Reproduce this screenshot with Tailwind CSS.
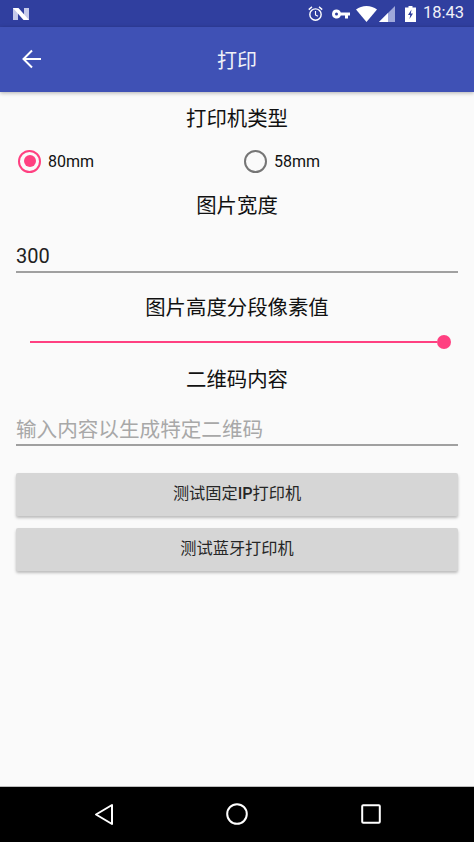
<!DOCTYPE html>
<html lang="zh-CN">
<head>
  <meta charset="UTF-8">
  <meta name="viewport" content="width=device-width, initial-scale=1.0">
  <title>打印</title>
  <script src="https://cdn.jsdelivr.net/npm/@tailwindcss/browser@4"></script>
</head>
<body class="bg-[#fafafa] font-['Roboto','Noto_Sans_CJK_SC',sans-serif]">
  <div class="w-[474px] h-[842px] flex flex-col overflow-hidden">
    <!-- Status bar -->
    <div class="h-[27px] shrink-0 bg-[#303f9f] flex items-center pl-[12px] pr-[10px] text-white">
      <svg class="w-[18px] h-[14px]" viewBox="0 0 18 14"><path d="M1 1h5v12H1z" fill="#c5cae9"/><path d="M12 1h5v12h-5z" fill="#c5cae9"/><path d="M1 1h5.500L17 13h-5.500z" fill="#fff"/></svg>
      <div class="ml-auto flex items-center">
        <svg class="w-[17px] h-[17px]" viewBox="0 0 24 24" fill="none" stroke="#fff" stroke-width="2"><circle cx="12" cy="13.5" r="8"/><path d="M12 8.500v5.500l3.500 2" stroke-width="1.600"/><path d="M2.500 6.500l4.500-3.800M21.500 6.500l-4.500-3.800"/></svg>
        <svg class="w-[18px] h-[10px] ml-[8px]" viewBox="0 0 18 10" fill="#fff"><path d="M4.500 0.500a4.500 4.500 0 0 1 4.300 3H18v3h-2v3h-3v-3H8.800a4.500 4.500 0 1 1-4.300-6zm0 3a1.500 1.500 0 1 0 0 3 1.500 1.500 0 0 0 0-3z" fill-rule="evenodd"/></svg>
        <svg class="w-[21px] h-[16px] ml-[6px]" viewBox="0 0 21 16"><path d="M0 3.500C3 1.200 6.500 0 10.500 0S18 1.200 21 3.500L10.500 16z" fill="#fff"/></svg>
        <svg class="w-[16px] h-[16px] ml-[2px]" viewBox="0 0 16 16"><path d="M0 16L16 0v16z" fill="#9fa8da"/><path d="M0 16L9 7v9z" fill="#fff"/></svg>
        <svg class="w-[11px] h-[16px] ml-[10px]" viewBox="0 0 11 16"><path d="M3.500 0h4v1.500H11V16H0V1.500h3.500z" fill="#fff"/><path d="M6.500 3.500L3 9h2.200l-.7 4L8 7.500H5.800z" fill="#303f9f"/></svg>
        <span class="ml-[7px] text-[16.500px] leading-none text-[#f0f1f8]">18:43</span>
      </div>
    </div>

    <!-- App bar -->
    <header class="relative z-10 h-[65px] shrink-0 bg-[#3f51b5] flex items-center pt-[2px] shadow-[0_1px_4px_rgba(0,0,0,0.3)]">
      <svg class="absolute left-[21px] top-[21px] w-[22px] h-[22px]" viewBox="0 0 22 22" fill="none" stroke="#fff" stroke-width="2"><path d="M20 11H3M11 2.500L2.500 11l8.500 8.500"/></svg>
      <h1 class="w-full text-center text-[20px] text-[#f0f1f8]">打印</h1>
    </header>

    <!-- Form -->
    <main class="flex-1 flex flex-col px-[16px]">
      <h2 class="mt-[12px] h-[30px] leading-[30px] text-center text-[20.400px] text-[#111]">打印机类型</h2>
      <div class="mt-[15px] h-[24px] flex items-center text-[16px] text-[#111]">
        <div class="w-[226px] flex items-center pl-[2px]">
          <span class="w-[23px] h-[23px] rounded-full border-[2px] border-[#ff4081] flex items-center justify-center"><span class="w-[12px] h-[12px] rounded-full bg-[#ff4081]"></span></span>
          <span class="ml-[7px] pt-[1px]">80mm</span>
        </div>
        <div class="flex items-center pl-[2px]">
          <span class="w-[23px] h-[23px] rounded-full border-[2px] border-[#757575]"></span>
          <span class="ml-[7px] pt-[1px]">58mm</span>
        </div>
      </div>
      <h2 class="mt-[18px] h-[30px] leading-[30px] text-center text-[20.400px] text-[#111]">图片宽度</h2>
      <div class="mt-[20px] h-[32px] leading-[30px] text-[20px] text-[#212121] border-b-[2px] border-[#a0a0a0]">300</div>
      <h2 class="mt-[20px] h-[30px] leading-[30px] text-center text-[20.400px] text-[#111]">图片高度分段像素值</h2>
      <div class="mt-[12px] h-[14px] relative">
        <div class="absolute left-[14px] right-[21px] top-[6px] h-[2px] bg-[#ff4081]"></div>
        <div class="absolute left-[421px] top-0 w-[14px] h-[14px] rounded-full bg-[#ff4081]"></div>
      </div>
      <h2 class="mt-[16px] h-[30px] leading-[30px] text-center text-[20.400px] text-[#111]">二维码内容</h2>
      <div class="mt-[19px] h-[32px] leading-[32px] text-[20.600px] text-[#a8a8a8] border-b-[2px] border-[#a0a0a0]">输入内容以生成特定二维码</div>
      <button class="mt-[27px] h-[43px] rounded-[2px] bg-[#d6d6d6] text-[16.200px] text-[#262626] shadow-[0_2px_3px_rgba(0,0,0,0.25)]">测试固定<span class="font-medium">IP</span>打印机</button>
      <button class="mt-[12px] h-[43px] rounded-[2px] bg-[#d6d6d6] text-[16.200px] text-[#262626] shadow-[0_2px_3px_rgba(0,0,0,0.25)]">测试蓝牙打印机</button>
    </main>

    <!-- Navigation bar -->
    <nav class="h-[56px] shrink-0 bg-black border-t border-[#bdbdbd] relative">
      <svg class="absolute left-[94px] top-[16px] w-[20px] h-[23px]" viewBox="0 0 20 23" fill="none" stroke="#fff" stroke-width="2" stroke-linejoin="round"><path d="M18 2v19L2 11.500z"/></svg>
      <svg class="absolute left-[226px] top-[16px] w-[22px] h-[22px]" viewBox="0 0 22 22" fill="none" stroke="#fff" stroke-width="2"><circle cx="11" cy="11" r="9.800"/></svg>
      <svg class="absolute left-[361px] top-[17px] w-[20px] h-[20px]" viewBox="0 0 20 20" fill="none" stroke="#fff" stroke-width="2" stroke-linejoin="round"><rect x="1.200" y="1.200" width="17.600" height="17.600" rx="1"/></svg>
    </nav>
  </div>
</body>
</html>
